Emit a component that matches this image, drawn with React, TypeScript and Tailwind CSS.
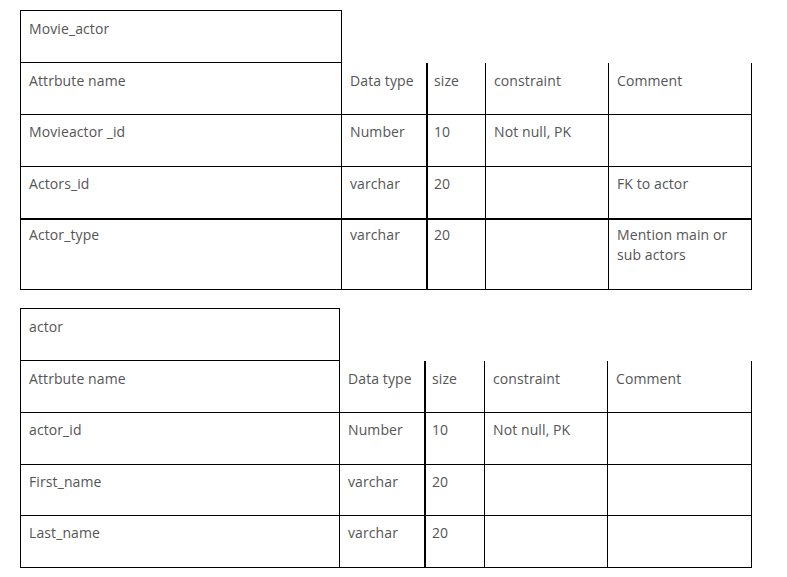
type Row = { cells: string[]; h: string; thick?: boolean; pt?: string };

const movieActorRows: Row[] = [
  { cells: ["Attrbute name", "Data type", "size", "constraint", "Comment"], h: "h-[52px]" },
  { cells: ["Movieactor _id", "Number", "10", "Not null, PK", ""], h: "h-[52px]" },
  { cells: ["Actors_id", "varchar", "20", "", "FK to actor"], h: "h-[53px]", thick: true },
  { cells: ["Actor_type", "varchar", "20", "", "Mention main or sub actors"], h: "h-[70px]", pt: "pt-[5px]" },
];

const actorRows: Row[] = [
  { cells: ["Attrbute name", "Data type", "size", "constraint", "Comment"], h: "h-[52px]" },
  { cells: ["actor_id", "Number", "10", "Not null, PK", ""], h: "h-[52px]" },
  { cells: ["First_name", "varchar", "20", "", ""], h: "h-[51px]" },
  { cells: ["Last_name", "varchar", "20", "", ""], h: "h-[52px]" },
];

function EntityTable({
  title,
  rows,
  widths,
}: {
  title: string;
  rows: Row[];
  widths: string[];
}) {
  return (
    <div className="flex flex-col">
      <div className={`${widths[0]} h-[53px] border border-black px-2 pt-2 leading-5`}>{title}</div>
      {rows.map((r, ri) => (
        <div key={ri} className="flex">
          {r.cells.map((c, ci) => (
            <div
              key={ci}
              className={`${r.h} ${ci === 0 ? `border-l border-black ${widths[0]}` : widths[ci]} ${
                ci === 1 ? "border-r-2" : "border-r"
              } ${r.thick ? "border-b-2" : "border-b"} border-black ${
                ci === 2 ? "pl-[6px]" : "pl-2"
              } pr-1 ${r.pt ?? (ri === 0 ? "pt-2" : "pt-[7px]")} leading-5`}
            >
              {c}
            </div>
          ))}
        </div>
      ))}
    </div>
  );
}

export default function App() {
  return (
    <div
      className="min-h-[577px] w-[787px] bg-white pl-5 pt-[10px] text-[14px] tracking-[0.1px] text-[#555]"
      style={{ fontFamily: '"Open Sans", "Noto Sans", sans-serif' }}
    >
      <EntityTable
        title="Movie_actor"
        rows={movieActorRows}
        widths={["w-[322px]", "w-[86px]", "w-[58px]", "w-[123px]", "w-[143px]"]}
      />
      <div className="mt-[18px]">
        <EntityTable
          title="actor"
          rows={actorRows}
          widths={["w-[320px]", "w-[86px]", "w-[59px]", "w-[123px]", "w-[144px]"]}
        />
      </div>
    </div>
  );
}
